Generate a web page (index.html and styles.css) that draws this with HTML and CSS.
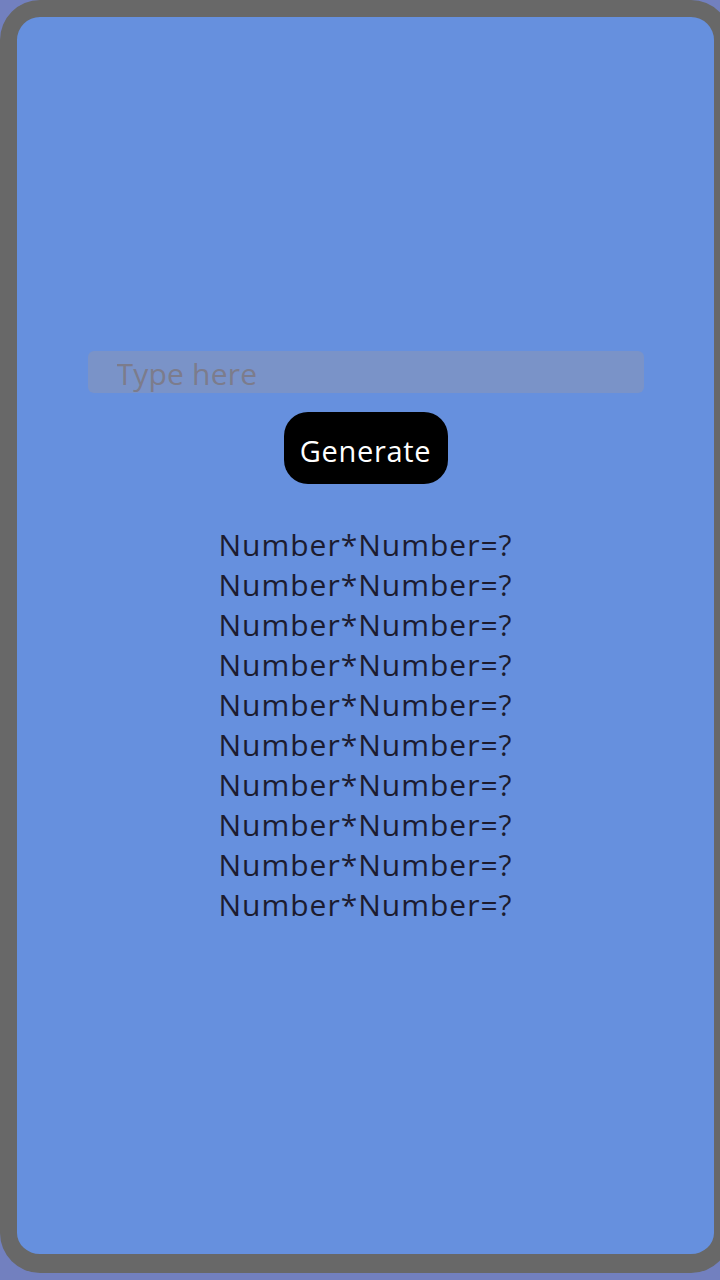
FILE: index.html
```html
<!DOCTYPE html>
<html>
<head>
<meta charset="utf-8">
<link rel="stylesheet" href="styles.css">
</head>
<body>
<div class="frame">
  <div class="screen">
    <input class="field" type="text" placeholder="Type here">
    <button class="gen">Generate</button>
    <div class="list">
      <div class="row">Number*Number=?</div>
      <div class="row">Number*Number=?</div>
      <div class="row">Number*Number=?</div>
      <div class="row">Number*Number=?</div>
      <div class="row">Number*Number=?</div>
      <div class="row">Number*Number=?</div>
      <div class="row">Number*Number=?</div>
      <div class="row">Number*Number=?</div>
      <div class="row">Number*Number=?</div>
      <div class="row">Number*Number=?</div>
    </div>
  </div>
</div>
</body>
</html>
```
FILE: styles.css
```css
html, body {
  margin: 0;
  padding: 0;
  width: 720px;
  height: 1280px;
  overflow: hidden;
  background: #7280bf;
  font-family: "Open Sans", "Noto Sans", sans-serif;
}
.frame {
  width: 731px;
  height: 1273px;
  box-sizing: border-box;
  border-style: solid;
  border-color: #686868;
  border-width: 17px 17px 19px 17px;
  border-radius: 40px;
  background: #6690de;
  overflow: hidden;
}
.screen {
  height: 100%;
  display: flex;
  flex-direction: column;
  align-items: center;
}
.field {
  margin-top: 334px;
  width: 556px;
  height: 42px;
  box-sizing: border-box;
  border: none;
  border-radius: 6px;
  background: #7a93c8;
  padding: 3px 0 0 29px;
  font-family: inherit;
  font-size: 30px;
  letter-spacing: 0.2px;
  color: #333;
  outline: none;
}
.field::placeholder {
  color: #7c7c8c;
}
.gen {
  margin-top: 19px;
  width: 164px;
  height: 72px;
  border: none;
  border-radius: 24px;
  background: #000;
  color: #fff;
  font-family: inherit;
  font-size: 29px;
  letter-spacing: 0.7px;
  padding: 4px 0 0 0;
}
.list {
  margin-top: 41px;
  display: flex;
  flex-direction: column;
  align-items: center;
}
.row {
  font-size: 30px;
  letter-spacing: 1px;
  line-height: 40px;
  color: #1c1c30;
}
```
